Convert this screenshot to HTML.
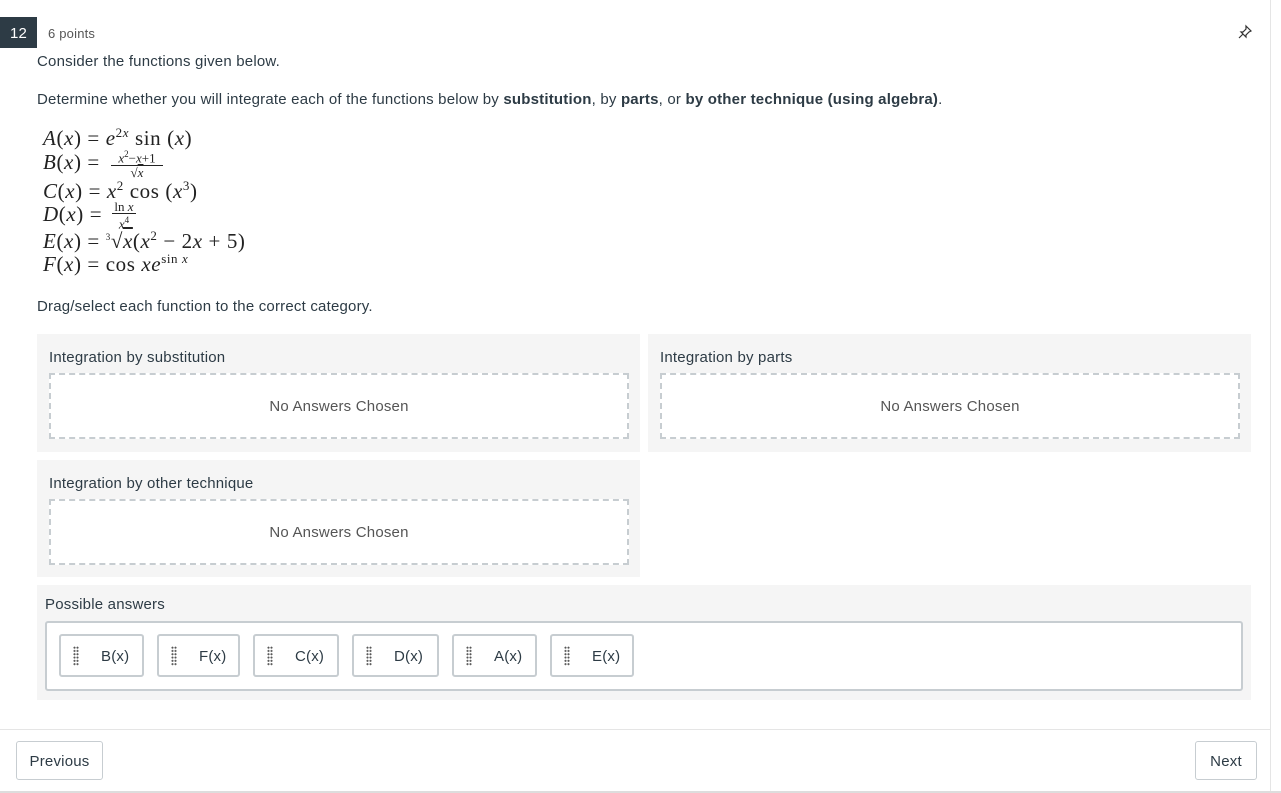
<!DOCTYPE html>
<html><head><style>
body{margin:0;width:1281px;height:793px;background:#fff;font-family:"Liberation Sans",sans-serif;color:#2d3b45;position:relative;overflow:hidden;letter-spacing:0.2px}
.a{position:absolute}
.m{font-family:"Liberation Serif",serif;font-size:21px;color:#222;white-space:nowrap;letter-spacing:0.6px}
.m i{font-style:italic}
.panel{background:#f5f5f5}
.drop{position:absolute;border:2px dashed #c7cdd1;background:#fff;text-align:center;font-size:15px;color:#555;line-height:64px}
.lab{position:absolute;font-size:15px}
.chip{position:absolute;top:634px;height:39px;border:2px solid #c7cdd1;border-radius:3px;background:#fff;font-size:15px;line-height:41px}
.chip .d{position:absolute;left:12px;top:10px;width:6px;height:20px;background:radial-gradient(circle,#555 0.9px,transparent 1.1px) 0 0/3px 3.3px}
.chip span{position:absolute;left:40px}
.btn{position:absolute;top:741px;height:37px;border:1px solid #c7cdd1;border-radius:3px;background:#fff;font-size:15px;line-height:39px;text-align:center}
</style></head><body>
<div class="a" style="left:0;top:17px;width:37px;height:31px;background:#2d3b45;color:#fff;font-size:15px;line-height:33px;text-align:center">12</div>
<div class="a" style="left:48px;top:26px;font-size:13px;color:#555">6 points</div>
<svg class="a" style="left:1237px;top:24px" width="16" height="16" viewBox="0 0 16 16" fill="none" stroke="#333" stroke-width="1.2"><path d="M9 2l5 5-2 1-3 3 0 2-5-5 2 0 3-3z M6 10l-4 4"/></svg>
<div class="a" style="left:37px;top:53px;font-size:15px">Consider the functions given below.</div>
<div class="a" style="left:37px;top:91px;font-size:15px">Determine whether you will integrate each of the functions below by <b>substitution</b>, by <b>parts</b>, or <b>by other technique (using algebra)</b>.</div>
<div class="a m" style="left:43px;top:125px"><i>A</i>(<i>x</i>) = <i>e</i><sup style="font-size:13px"><span>2</span><i>x</i></sup> sin (<i>x</i>)</div>
<div class="a m" style="left:43px;top:150px"><i>B</i>(<i>x</i>) = </div>
<div class="a m" style="left:111px;top:147px;font-size:13px;text-align:center;width:52px;letter-spacing:0"><div style="border-bottom:1px solid #222;line-height:14px"><i>x</i><sup style="font-size:9px">2</sup>−<i>x</i>+1</div><div style="line-height:13px">√<i style="text-decoration:overline">x</i></div></div>
<div class="a m" style="left:43px;top:178px"><i>C</i>(<i>x</i>) = <i>x</i><sup style="font-size:13px">2</sup> cos (<i>x</i><sup style="font-size:13px">3</sup>)</div>
<div class="a m" style="left:43px;top:202px"><i>D</i>(<i>x</i>) = </div>
<div class="a m" style="left:112px;top:200px;font-size:13px;text-align:center;width:24px;letter-spacing:0"><div style="border-bottom:1px solid #222;line-height:13px">ln <i>x</i></div><div style="line-height:12px"><i>x</i><sup style="font-size:9px">4</sup></div></div>
<div class="a m" style="left:43px;top:228px"><i>E</i>(<i>x</i>) = <sup style="font-size:9px">3</sup>√<i style="text-decoration:overline">x</i>(<i>x</i><sup style="font-size:13px">2</sup> − 2<i>x</i> + 5)</div>
<div class="a m" style="left:43px;top:251px"><i>F</i>(<i>x</i>) = cos <i>x</i><i>e</i><sup style="font-size:13px">sin <i>x</i></sup></div>
<div class="a" style="left:37px;top:298px;font-size:15px">Drag/select each function to the correct category.</div>

<div class="a panel" style="left:37px;top:334px;width:603px;height:118px"></div>
<div class="lab" style="left:49px;top:349px">Integration by substitution</div>
<div class="drop" style="left:49px;top:373px;width:576px;height:62px">No Answers Chosen</div>
<div class="a panel" style="left:648px;top:334px;width:603px;height:118px"></div>
<div class="lab" style="left:660px;top:349px">Integration by parts</div>
<div class="drop" style="left:660px;top:373px;width:576px;height:62px">No Answers Chosen</div>
<div class="a panel" style="left:37px;top:460px;width:603px;height:117px"></div>
<div class="lab" style="left:49px;top:475px">Integration by other technique</div>
<div class="drop" style="left:49px;top:499px;width:576px;height:62px">No Answers Chosen</div>

<div class="a panel" style="left:37px;top:585px;width:1214px;height:115px"></div>
<div class="lab" style="left:45px;top:596px">Possible answers</div>
<div class="a" style="left:45px;top:621px;width:1194px;height:66px;border:2px solid #c7cdd1;border-radius:3px;background:#fff"></div>
<div class="chip" style="left:59px;width:81px"><div class="d"></div><span>B(x)</span></div>
<div class="chip" style="left:157px;width:79px"><div class="d"></div><span>F(x)</span></div>
<div class="chip" style="left:253px;width:82px"><div class="d"></div><span>C(x)</span></div>
<div class="chip" style="left:352px;width:83px"><div class="d"></div><span>D(x)</span></div>
<div class="chip" style="left:452px;width:81px"><div class="d"></div><span>A(x)</span></div>
<div class="chip" style="left:550px;width:80px"><div class="d"></div><span>E(x)</span></div>

<div class="a" style="left:0;top:729px;width:1270px;height:1px;background:#e5e5e5"></div>
<div class="btn" style="left:16px;width:85px">Previous</div>
<div class="btn" style="left:1195px;width:60px">Next</div>
<div class="a" style="left:1270px;top:0;width:1px;height:793px;background:#e5e5e5"></div>
<div class="a" style="left:0;top:791px;width:1281px;height:2px;background:#ddd"></div>
</body></html>
